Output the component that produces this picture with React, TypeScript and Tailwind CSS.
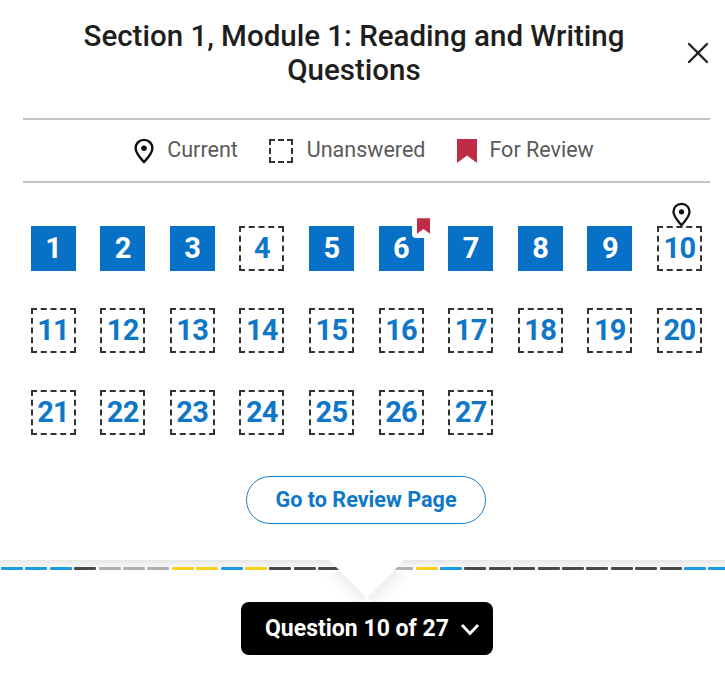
import React from "react";
import { X } from "lucide-react";

// Status of each question
const questions = Array.from({ length: 27 }, (_, i) => {
  const n = i + 1;
  return { n, answered: n <= 9 && n !== 4, review: n === 6, current: n === 10 };
});

const B = "bg-[#1a9be0]";
const D = "bg-[#4a4a4a]";
const G = "bg-[#b0b0b0]";
const Y = "bg-[#f7d117]";

const dashes = [
  B, B, B, D, G, G, G, Y, Y, B, Y, D, D, D, D, D, G, Y, B,
  D, D, D, D, D, D, D, D, D, B, B,
];

function Pin({ className }: { className: string }) {
  return (
    <svg viewBox="0 0 24 28" className={className} fill="none">
      <path
        d="M12 2 C6.5 2 3 6.2 3 11 C3 16.5 8.5 22 12 26 C15.5 22 21 16.5 21 11 C21 6.2 17.5 2 12 2 Z"
        stroke="#111"
        strokeWidth="2.6"
        strokeLinejoin="round"
      />
      <circle cx="12" cy="11" r="3" fill="#111" />
    </svg>
  );
}

function Bookmark({ className }: { className: string }) {
  return (
    <svg viewBox="0 0 20 24" className={className}>
      <path d="M0 0 H20 V24 L10 16.5 L0 24 Z" fill="#c02b45" />
    </svg>
  );
}

function Legend() {
  return (
    <div className="h-[65px] mr-[6px] pr-[7px] border-y-2 border-[#c4c4c4] flex items-center justify-center text-[21.5px] text-[#5a5a5a]">
      <Pin className="w-[24px] h-[26px] mr-[11px]" />
      <span>Current</span>
      <div className="w-[24px] h-[24px] border-2 border-dashed border-[#333] ml-[31px] mr-[14px]" />
      <span>Unanswered</span>
      <Bookmark className="w-[20px] h-[24px] ml-[32px] mr-[12px]" />
      <span>For Review</span>
    </div>
  );
}

function Chip({ n, answered, review, current }: { n: number; answered: boolean; review: boolean; current: boolean }) {
  return (
    <div
      className={`relative w-[45px] h-[45px] flex items-center justify-center text-[29px] font-bold tracking-tight ${
        answered ? "bg-[#0671c6] text-white" : "border-2 border-dashed border-[#333] text-[#0f77c8]"
      }`}
    >
      {n}
      {review && (
        <>
          <div className="absolute top-0 right-0 w-[12px] h-[12px] bg-white rounded-bl-[4px]" />
          <Bookmark className="absolute -top-[8px] -right-[6px] w-[13px] h-[16px]" />
        </>
      )}
      {current && <Pin className="absolute -top-[26px] left-[11px] w-[23px] h-[25px]" />}
    </div>
  );
}

export default function App() {
  return (
    <div className="w-[725px] h-[679px] bg-white overflow-hidden font-['Roboto',sans-serif] flex flex-col">
      <div className="pl-[23px] pr-[9px] pt-[19px]">
        {/* Title row */}
        <div className="flex items-start h-[99px]">
          <h1 className="flex-1 pl-[5px] text-center text-[29.5px] leading-[34px] font-medium text-[#1e1e1e]">
            Section 1, Module 1: Reading and Writing Questions
          </h1>
          <X className="w-[36px] h-[36px] text-[#222] shrink-0 mt-[16px]" strokeWidth={1.6} />
        </div>
        <Legend />
      </div>

      {/* Question grid */}
      <div className="pl-[30.6px] pt-[43px] grid grid-cols-[repeat(10,45px)] gap-x-[24.6px] gap-y-[37px]">
        {questions.map((q) => (
          <Chip key={q.n} {...q} />
        ))}
      </div>

      <div className="flex justify-center pt-[41px] pl-[7px]">
        <button className="w-[240px] h-[48px] rounded-full border-[1.5px] border-[#1580cf] text-[#0f77c8] text-[21.6px] font-bold">
          Go to Review Page
        </button>
      </div>

      {/* Progress strip with notch */}
      <div className="relative mt-[36px] h-[119px]">
        <div className="h-[10px] bg-gradient-to-b from-[#e6e6e6] to-white" />
        <div className="absolute top-[7px] left-[1px] flex gap-[2.4px]">
          {dashes.map((c, i) => (
            <div key={i} className={`w-[22px] h-[3px] rounded-[1px] ${c}`} />
          ))}
        </div>
        <svg viewBox="0 0 134 44" className="absolute left-[300px] top-0 w-[134px] h-[44px]">
          <defs>
            <linearGradient id="foldL" gradientUnits="userSpaceOnUse" x1="50" y1="21" x2="38" y2="33">
              <stop offset="0" stopColor="#f0f0f0" />
              <stop offset="1" stopColor="#ffffff" />
            </linearGradient>
            <linearGradient id="foldR" gradientUnits="userSpaceOnUse" x1="84" y1="21" x2="96" y2="33">
              <stop offset="0" stopColor="#f0f0f0" />
              <stop offset="1" stopColor="#ffffff" />
            </linearGradient>
          </defs>
          <path d="M39 10 L67 38 L60 42 L30 42 L19 22 Z" fill="url(#foldL)" />
          <path d="M95 10 L67 38 L74 42 L104 42 L115 22 Z" fill="url(#foldR)" />
          <path d="M29 0 L67 38 L104 0 Z" fill="#ffffff" />
        </svg>
        <div className="flex justify-center pt-[32px] pl-[9px]">
          <button className="w-[252px] h-[53px] bg-black rounded-[8px] pl-[24px] pt-[2px] text-white text-[23px] font-bold flex items-center relative z-10">
            Question 10 of 27
            <svg viewBox="0 0 20 13" className="w-[20px] h-[13px] ml-[11px]" fill="none">
              <path d="M2 2 L10 10.5 L18 2" stroke="#ffffff" strokeWidth="2.8" />
            </svg>
          </button>
        </div>
      </div>
    </div>
  );
}
